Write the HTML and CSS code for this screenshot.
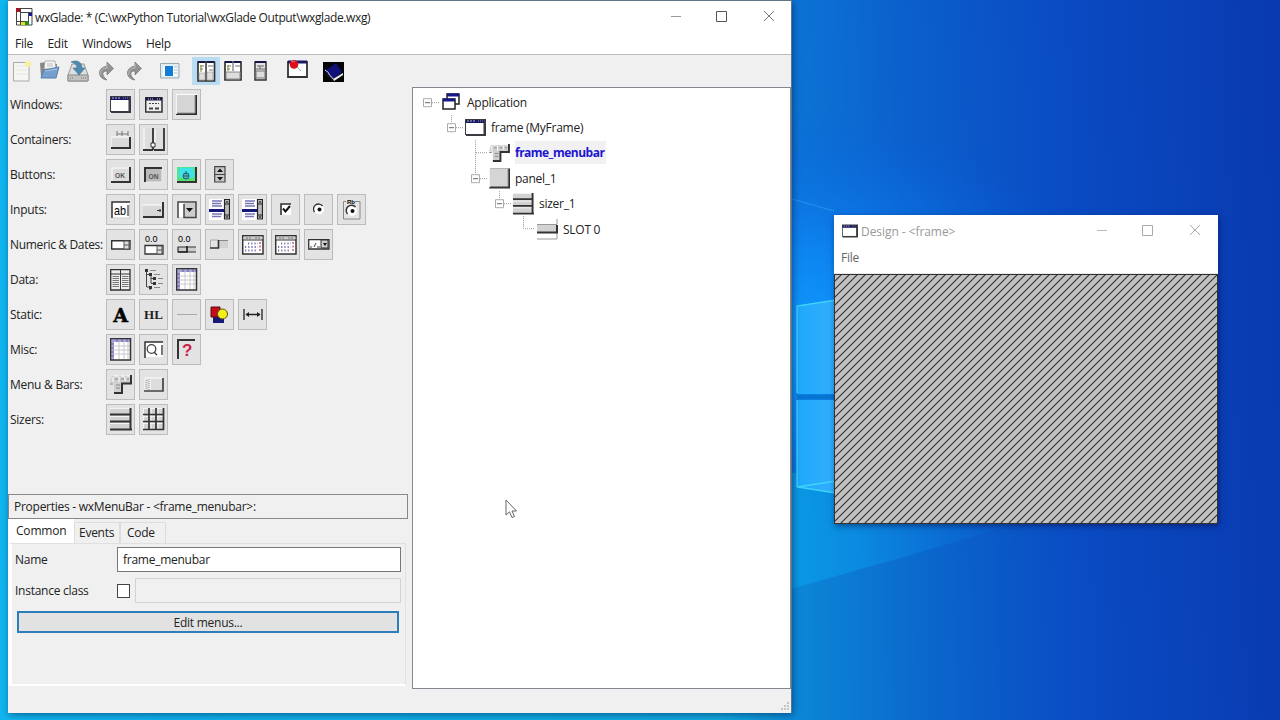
FILE: index.html
```html
<!DOCTYPE html>
<html lang="en">
<head>
<meta charset="utf-8">
<title>wxGlade</title>
<link rel="stylesheet" href="styles.css">
</head>
<body>
<svg class="defs" width="0" height="0">
<defs>
<symbol id="frame" viewBox="0 0 21 17"><path d="M0 0H21V17H1V16H0Z" fill="#3a3a42"/><path d="M1 4H18.5V15H1Z" fill="#fff"/><path d="M1 1H19V4H1Z" fill="#171760"/><path d="M2 2H10" stroke="#bbc" stroke-dasharray="2 1"/><path d="M13 2H18" stroke="#99a" stroke-dasharray="1 1"/></symbol>
<symbol id="panel" viewBox="0 0 22 22"><path d="M0 0H22V22H0Z" fill="#fff"/><path d="M1 1H22V22H0V21H1Z" fill="#2d2d2d"/><path d="M1 1H20V20H1Z" fill="#d5d5d5"/><path d="M1 20H20V1" fill="none" stroke="#888"/></symbol>
<symbol id="bars" viewBox="0 0 22 23"><path d="M0 0H21V22H0Z" fill="#d2d2d2"/><path d="M0 .5H20M0 8.500H20M0 15.500H20" stroke="#f4f4f4"/><path d="M0 6.500H21M0 13.500H21M0 21.5H22" stroke="#333" stroke-width="1.8"/><path d="M20.500 0V22" stroke="#333" stroke-width="2"/></symbol>
<symbol id="menubar" viewBox="0 0 22 19"><path d="M2 1H21V9H12V18H4V8H0Z" fill="#cfcfcf"/><path d="M21 0V8.5H12V18H4" fill="none" stroke="#333" stroke-width="2"/><path d="M3 2V7M4 1H9M9 2V7M11 1H15M15 2V6M17 1H20" stroke="#fff"/><path d="M0 9H3M5 4H8M11 4H14M17 4H19M6 10H10M6 13H10" stroke="#888"/></symbol>
<symbol id="grid" viewBox="0 0 22 23"><path d="M0 0H21V22H0Z" fill="#fff"/><path d="M0 0H21V4H4V22H0Z" fill="#a7a3d8"/><path d="M4 8H20M4 12H20M4 16H20M9 4V21M14 4V21M18 4V21" stroke="#c7c7cd"/><path d="M1 6H4M1 10H4M1 14H4M1 18H4M7 1V4M12 1V4M17 1V4" stroke="#696590"/><path d="M.5 .5H20.5V22H.5Z" fill="none" stroke="#333" stroke-width="1.5"/></symbol>
<symbol id="list" viewBox="0 0 21 21"><path d="M0 0H21V21H0Z" fill="#fff"/><path d="M3 2H13M3 4.500H12M3 7H13M3 15H13M3 17.500H12" stroke="#7777b5" stroke-width="1.5"/><path d="M0 10H15V13H0Z" fill="#181878"/><path d="M15.5 .5H20.5V20H15.5ZM15.500 5H20.500M15.500 16H20.500" fill="#bbb" stroke="#222" stroke-width="1.2"/><path d="M16.500 3.500L18 2L19.500 3.500ZM16.500 17.500L18 19L19.500 17.500Z" fill="#000"/></symbol>
<symbol id="calendar" viewBox="0 0 22 20"><path d="M.7 .7H21V19H.7Z" fill="#fff" stroke="#333" stroke-width="1.5"/><path d="M1.500 3H20.500" stroke="#ccc" stroke-width="2.500"/><path d="M4 3H9M13 3H18" stroke="#777" stroke-dasharray="2 1"/><path d="M1 5H21" stroke="#333"/><path d="M6 8.500H16M3 12H16M3 15.500H14" stroke="#7272aa" stroke-width="2" stroke-dasharray="1.200 2"/><path d="M18 7V17" stroke="#cc647e" stroke-width="1.500" stroke-dasharray="2 1.500"/></symbol>
<symbol id="redo" viewBox="0 0 28 28"><path d="M15 5L21.500 11.500L15 18V14C10 14 9 18 15 23C6 22 4 11 15 9Z" fill="#929292" stroke="#777" stroke-width=".7"/><path d="M15 7V11C10 11 8 14 9 18" fill="none" stroke="#bdbdbd"/></symbol>
<linearGradient id="sky" x1="0" x2="1" y1=".45" y2=".4"><stop offset="0" stop-color="#0c76d6"/><stop offset=".25" stop-color="#0b60cc"/><stop offset=".55" stop-color="#0a4cc4"/><stop offset="1" stop-color="#093ab0"/></linearGradient>
<linearGradient id="edge" x1="0" x2="1"><stop offset="0" stop-color="#10b6f0"/><stop offset=".9" stop-color="#11aadf"/><stop offset="1" stop-color="#0b88d2"/></linearGradient>
<radialGradient id="glow"><stop offset="0" stop-color="#109cff"/><stop offset=".4" stop-color="#0d88f6" stop-opacity=".8"/><stop offset="1" stop-color="#0b5ddd" stop-opacity="0"/></radialGradient>
<linearGradient id="beam" x1="0" x2="1"><stop offset="0" stop-color="#0a9be4"/><stop offset=".3" stop-color="#0b8de2" stop-opacity=".9"/><stop offset="1" stop-color="#0b66dd" stop-opacity="0"/></linearGradient>
<linearGradient id="low" x1="0" x2="1"><stop offset="0" stop-color="#0b8ed8" stop-opacity=".9"/><stop offset=".5" stop-color="#0b6bcb" stop-opacity=".5"/><stop offset="1" stop-color="#0a50c4" stop-opacity="0"/></linearGradient>
<linearGradient id="pane" x1="0" x2="1"><stop offset="0" stop-color="#20a9fb"/><stop offset="1" stop-color="#32aefe"/></linearGradient>
<pattern id="hatch" width="8" height="8" patternUnits="userSpaceOnUse"><path d="M-2 10L10 -2M-2 2L2 -2M6 10L10 6" stroke="#303030" stroke-width="1.1"/></pattern>
</defs>
</svg>
<main class="desktop">
<svg class="wallpaper" width="1280" height="720">
<rect width="800" height="720" fill="url(#edge)"/>
<rect x="792" width="488" height="720" fill="url(#sky)"/>
<ellipse cx="800" cy="340" rx="300" ry="230" fill="url(#glow)"/>
<path d="M780 500H1100V720H780Z" fill="url(#low)"/>
<path d="M780 470L1030 520L900 558L780 592Z" fill="url(#beam)"/>
<path d="M792 199L834 211" stroke="#3ba3f5" opacity=".6"/>
<path d="M797 306L836 300V394H797ZM797 400H836V493L797 487Z" fill="url(#pane)"/>
<path d="M836 300L797 306V393M797 400V487L836 493M797 487L836 481" fill="none" stroke="#3fd5fa" stroke-width="1.300"/>
<path d="M797 397H836" stroke="#0874d2" stroke-width="5"/>
</svg>

<section class="window main">
<header class="titlebar">
<svg width="17" height="18" viewBox="0 0 17 18"><path d="M.5 .5H16V17H.5Z" fill="#fff" stroke="#444"/><path d="M4.500 0V17M4 4.500H16M12.500 4V17M1 13.500H13" stroke="#444"/><path d="M0 0H4V4H0Z" fill="#a31225"/><path d="M13 5H16V8H13Z" fill="#171799"/><path d="M5 14H9V17H5Z" fill="#e7dc17"/><path d="M9 13H13V17H9Z" fill="#258c29"/></svg>
<span class="title t-title">wxGlade: * (C:\wxPython Tutorial\wxGlade Output\wxglade.wxg)</span>
<svg class="controls" width="102" height="12" viewBox="0 0 102 12"><path d="M0 5.500H10" stroke="#999"/><path d="M45.500 .5H55.500V10.500H45.500Z" fill="none" stroke="#555"/><path d="M93 0L103 10M103 0L93 10" stroke="#777"/></svg>
</header>
<nav class="menu"><span>File</span><span>Edit</span><span>Windows</span><span>Help</span></nav>
<div class="toolbar">
<svg class="tool" viewBox="1 0 28 28"><path d="M6.500 5.500H22V24H6.500Z" fill="#f6f6f2" stroke="#aaa"/><path d="M8 9H20M8 13H20M8 17H20" stroke="#e7e7e2"/><circle cx="21" cy="7" r="3" fill="#f4f29c"/></svg>
<svg class="tool" viewBox="1 0 28 28"><path d="M5 6L11 5L13 7H22V20H6Z" fill="#888"/><path d="M10 4H20L21 12H9Z" fill="#f5f5f5" stroke="#999" stroke-width=".7"/><path d="M12 7H18M12 9H18" stroke="#bbb"/><path d="M9 13L24 10L21 21H6Z" fill="#749fce" stroke="#5781ae"/><path d="M10 14L22 12" stroke="#a9c8e6"/></svg>
<svg class="tool" viewBox="0 0 28 28"><path d="M8 7H20L24 18V24H4V18Z" fill="#dedede" stroke="#999"/><path d="M4 18H24V24H4Z" fill="#c2c2c2" stroke="#888"/><path d="M17 21H22M6 21H10" stroke="#777" stroke-dasharray="1 1"/><path d="M7 5C14 2 18 6 18 11H21L15 18L9 11H13C13 8 11 6 7 5Z" fill="#4d8bae" stroke="#3c718f" stroke-width=".6"/></svg>
<svg class="tool"><use href="#redo"/></svg><svg class="tool"><use href="#redo"/></svg>
<svg class="tool gap" viewBox="0 0 28 28"><path d="M4.500 6.500H23V21H4.500Z" fill="#e2edf3" stroke="#9caaaf"/><path d="M7 9H21V19H7Z" fill="#fff"/><path d="M9 9H17V19H9Z" fill="#127dd6"/><path d="M18 10H21M18 13H21M18 16H21" stroke="#a7bac5"/></svg>
<svg class="tool gap active" viewBox="1 0 28 28"><path d="M7 5H23.500V24H7Z" fill="#fff" stroke="#333" stroke-width="1.700"/><path d="M7 5H14M16 5H23" stroke="#171744" stroke-width="2"/><path d="M15 4V24" stroke="#333" stroke-width="1.500"/><path d="M9 9H13M9 12H12M17 9H22M18 13H22" stroke="#777"/><path d="M10 8V15" stroke="#729129"/><path d="M8 16H14V23H8ZM16 15H22V23H16Z" fill="#ddd" stroke="#888" stroke-width=".5"/></svg>
<svg class="tool" viewBox="1 0 28 28"><path d="M6 5H22V23H6Z" fill="#fff" stroke="#333" stroke-width="1.700"/><path d="M6 5H13M15 5H22" stroke="#171744" stroke-width="2"/><path d="M14 4V14" stroke="#555"/><path d="M8 9H12M8 12H11M16 9H21" stroke="#777"/><path d="M9 8V14" stroke="#729129"/><path d="M7 15H21V22H7Z" fill="#ddd" stroke="#888"/></svg>
<svg class="tool" viewBox="1 0 28 28"><path d="M8 5H19V23H8Z" fill="#e4e4e4" stroke="#333" stroke-width="1.500"/><path d="M8 5H19" stroke="#171744" stroke-width="2"/><path d="M10 9H17M8 12H19M13 9V12" stroke="#666"/><path d="M9 14H18V21H9Z" fill="#ddd" stroke="#777"/></svg>
<svg class="tool gap" viewBox="1 1 28 28"><path d="M5 6H24V21H5Z" fill="#fff" stroke="#333" stroke-width="1.800"/><path d="M5 6H24" stroke="#191967" stroke-width="3"/><path d="M13 10L18 15" stroke="#aaa"/><circle cx="11" cy="8.500" r="4.300" fill="#d9111b"/><path d="M8 5L12 6" stroke="#ff6464"/></svg>
<svg class="tool gap" viewBox="1 0 28 28"><path d="M4 5H25V25H4Z" fill="#050507"/><path d="M6 14L17 6L23 15L14 22Z" fill="#101078"/><path d="M6 14L14 22V25L6 17ZM14 22L24 16V19L15 25Z" fill="#111"/><path d="M14 22L24 16V18L15 24Z" fill="#eee"/><path d="M6 13C8 15 9 14 10 17S13 19 14 22" fill="none" stroke="#d8d8ff"/></svg>
</div>
<div class="content">
<div class="left">
<div class="palette">
<div class="prow"><span>Windows:</span>
<i class="pb"><svg width="21" height="17"><use href="#frame"/></svg></i>
<i class="pb"><svg width="18" height="16" viewBox="0 0 18 16"><path d="M.7 .7H17V15H.7Z" fill="#eee" stroke="#333" stroke-width="1.500"/><path d="M1 2H17" stroke="#171744" stroke-width="3"/><path d="M3 2H8M12 2H16" stroke="#ccc" stroke-dasharray="1 1"/><path d="M4 6.500H14" stroke="#444" stroke-dasharray="2 1"/><path d="M4 11.500H8M10 11.500H14" stroke="#444" stroke-width="2"/></svg></i>
<i class="pb"><svg width="21" height="23"><use href="#panel"/></svg></i></div>
<div class="prow"><span>Containers:</span>
<i class="pb"><svg width="20" height="18" viewBox="0 0 20 18"><path d="M0 6H19V17H0Z" fill="#dadada"/><path d="M0 17V6H18" fill="none" stroke="#fff"/><path d="M0 17H19V6" fill="none" stroke="#333" stroke-width="2"/><path d="M6 0V5M11 0V5M17 0V5M6 3H17" stroke="#777"/></svg></i>
<i class="pb"><svg width="22" height="23" viewBox="0 0 22 23"><path d="M0 0H21V22H0Z" fill="#dedede"/><path d="M0 22H10M11 22H21V0M10 0V22" fill="none" stroke="#333" stroke-width="1.800"/><path d="M1 0V21M12 1V15" stroke="#fff"/><path d="M8 15H12V19H8Z" fill="#fff" stroke="#333"/></svg></i></div>
<div class="prow"><span>Buttons:</span>
<i class="pb"><svg width="20" height="16" viewBox="0 0 20 16"><path d="M0 0H19V15H0Z" fill="#dcdcdc"/><path d="M1 15V1H18" fill="none" stroke="#fff"/><path d="M0 15H19V0" fill="none" stroke="#333" stroke-width="2"/><text x="4" y="10.500" class="mono" textLength="10" lengthAdjust="spacingAndGlyphs">OK</text></svg></i>
<i class="pb"><svg width="19" height="16" viewBox="0 0 19 16"><path d="M0 0H18V15H0Z" fill="#bbb"/><path d="M1 15V1H18" fill="none" stroke="#333" stroke-width="2"/><path d="M2 15H18V2" fill="none" stroke="#eee"/><text x="4.500" y="12" class="mono" textLength="10" lengthAdjust="spacingAndGlyphs">ON</text></svg></i>
<i class="pb"><svg width="20" height="16" viewBox="0 0 20 16"><path d="M0 0H19V15H0Z" fill="#4be696"/><path d="M3 1H15L18 8L13 13H5L2 7Z" fill="#3de3e7"/><path d="M1 11H18V14H1Z" fill="#53df71"/><path d="M0 15H19V0" fill="none" stroke="#333" stroke-width="2"/><circle cx="9" cy="9" r="3" fill="#65aeb0" stroke="#165d77"/><path d="M9 4V7M7 9H11" stroke="#165d77"/></svg></i>
<i class="pb"><svg width="12" height="17" viewBox="0 0 12 17"><path d="M.7 .7H11V16H.7ZM1 8.500H11" fill="#c8c8c8" stroke="#444" stroke-width="1.200"/><path d="M3 6L6 2.500L9 6ZM3 11L6 14.500L9 11Z" fill="#111"/></svg></i></div>
<div class="prow"><span>Inputs:</span>
<i class="pb"><svg width="20" height="18" viewBox="0 0 20 18"><path d="M1 17V1H19" fill="#fff" stroke="#333" stroke-width="1.500"/><path d="M2 2H19V17H2Z" fill="#fff"/><path d="M2 17H18.500V3" fill="none" stroke="#ccc"/><text x="3" y="14" class="abl" textLength="12" lengthAdjust="spacingAndGlyphs">ab</text><path d="M17 4V15" stroke="#111"/></svg></i>
<i class="pb"><svg width="21" height="16" viewBox="0 0 21 16"><path d="M0 3H20V15H0Z" fill="#d8d8d8"/><path d="M0 3H19" stroke="#fff"/><path d="M0 15H20V0" fill="none" stroke="#333" stroke-width="2"/><path d="M14 8.500H18M17 7V10" stroke="#333"/></svg></i>
<i class="pb"><svg width="20" height="18" viewBox="0 0 20 18"><path d="M1 1H19V16H1Z" fill="#fff"/><path d="M7 2H19V16H7Z" fill="#ccc"/><path d="M1 17V1H19V16.500H7V3" fill="none" stroke="#444" stroke-width="1.500"/><path d="M9 7H16L12.500 11Z" fill="#111"/></svg></i>
<i class="pb"><svg width="21" height="21"><use href="#list"/></svg></i><i class="pb"><svg width="21" height="21"><use href="#list"/></svg></i>
<i class="pb low"><svg width="12" height="13" viewBox="0 0 12 13"><path d="M1 12V1H11" fill="none" stroke="#333" stroke-width="1.600"/><path d="M2 2H11V12H2Z" fill="#fff"/><path d="M3 5.500L5.500 8.500L10 3" fill="none" stroke="#111" stroke-width="2"/></svg></i>
<i class="pb"><svg width="12" height="13" viewBox="0 0 12 13"><circle cx="6" cy="6.500" r="5" fill="#fff"/><path d="M1.500 9A5 5 0 0 1 9.500 3" fill="none" stroke="#333" stroke-width="1.300"/><circle cx="6.500" cy="6.500" r="2" fill="#111"/></svg></i>
<i class="pb"><svg width="18" height="21" viewBox="0 0 18 21"><path d="M.5 2.500H17V20H.5Z" fill="#e5e5e5" stroke="#888"/><path d="M3 0H12V5H3Z" fill="#e5e5e5"/><text x="4" y="5" class="rb">Rb</text><circle cx="9" cy="12" r="5" fill="#fff"/><path d="M4.500 15A5 5 0 0 1 12.500 8" fill="none" stroke="#333" stroke-width="1.500"/><circle cx="9.500" cy="12" r="2" fill="#111"/></svg></i></div>
<div class="prow"><span class="t-num">Numeric &amp; Dates:</span>
<i class="pb"><svg width="20" height="10" viewBox="0 0 20 10"><path d="M.7 .7H19V9H.7Z" fill="#fff" stroke="#333" stroke-width="1.400"/><path d="M13 1H18V9H13ZM13 5H18" fill="#ddd" stroke="#555"/></svg></i>
<i class="pb"><svg width="20" height="20" viewBox="0 0 20 20"><text x="1" y="7" class="num">0.0</text><path d="M1 10.500H19V19H1Z" fill="#fff" stroke="#333" stroke-width="1.300"/><path d="M13 11H18V19H13ZM13 15H18" fill="#ddd" stroke="#555"/></svg></i>
<i class="pb"><svg width="20" height="20" viewBox="0 0 20 20"><text x="1" y="7" class="num">0.0</text><path d="M19 12H1V17H19" fill="#ccc" stroke="#333" stroke-width="1.200"/><path d="M1 17H10V11" fill="none" stroke="#222" stroke-width="1.700"/></svg></i>
<i class="pb"><svg width="19" height="12" viewBox="0 0 19 12"><path d="M8 2H18V9H8Z" fill="#d2d2d2"/><path d="M8 1.500H18" stroke="#888"/><path d="M0 1H8V9H0Z" fill="#e4e4e4"/><path d="M.5 9V1H8" fill="none" stroke="#aaa"/><path d="M0 9H8.500V1" fill="none" stroke="#333" stroke-width="1.600"/></svg></i>
<i class="pb"><svg width="22" height="20"><use href="#calendar"/></svg></i><i class="pb"><svg width="22" height="20"><use href="#calendar"/></svg></i>
<i class="pb"><svg width="22" height="11" viewBox="0 0 22 11"><path d="M.7 .7H21V10H.7Z" fill="#fff" stroke="#333" stroke-width="1.300"/><path d="M13 1H20V9H13Z" fill="#ccc" stroke="#333"/><path d="M15 4H19L17 7Z" fill="#111"/><path d="M2 8H4M6 8L8 4M9 8H12" stroke="#444"/></svg></i></div>
<div class="prow"><span>Data:</span>
<i class="pb"><svg width="21" height="22" viewBox="0 0 21 22"><path d="M.7 .7H20V21H.7Z" fill="#eee" stroke="#333" stroke-width="1.300"/><path d="M1 5H20M10.500 1V21" stroke="#333"/><path d="M2.500 7.500H9M2.500 9.500H9M2.500 11.500H9M2.500 13.500H9M2.500 15.500H9M2.500 17.500H9M12 7.500H18.500M12 9.500H18.500M12 11.500H18.500M12 13.500H18.500M12 15.500H18.500M12 17.500H18.500" stroke="#777"/></svg></i>
<i class="pb"><svg width="20" height="22" viewBox="0 0 20 22"><path d="M2.500 2V18M3 18H6V21M7 6V14M3 5.500H7M7 9.500H10M7 14.500H10" fill="none" stroke="#444"/><path d="M1 0H4V3H1ZM5 4H8V7H5ZM9 8H12V11H9ZM9 13H12V16H9ZM5 17H8V20H5Z" fill="#333"/><path d="M6 1.500H12M10 5.500H16M14 9.500H19M14 14.500H19M10 18.500H16" stroke="#888"/></svg></i>
<i class="pb"><svg width="22" height="23"><use href="#grid"/></svg></i></div>
<div class="prow"><span>Static:</span>
<i class="pb"><b class="big">A</b></i><i class="pb"><b class="hl">HL</b></i>
<i class="pb"><svg width="20" height="3" viewBox="0 0 20 3"><path d="M0 1.500H20" stroke="#aaa"/></svg></i>
<i class="pb"><svg width="19" height="18" viewBox="0 0 19 18"><path d="M3 9H14V17H3Z" fill="#171777"/><path d="M1 1H10V11H1Z" fill="#c40c1b" stroke="#511"/><circle cx="12.500" cy="8" r="5" fill="#f4ef16" stroke="#55521a"/></svg></i>
<i class="pb"><svg width="20" height="11" viewBox="0 0 20 11"><path d="M1 0V11M19 0V11M3 5.500H17" stroke="#222" stroke-width="1.300"/><path d="M2.500 5.500L6 3V8ZM17.500 5.500L14 3V8Z" fill="#222"/></svg></i></div>
<div class="prow"><span>Misc:</span>
<i class="pb"><svg width="22" height="23"><use href="#grid"/></svg></i>
<i class="pb"><svg width="20" height="18" viewBox="0 0 20 18"><path d="M1 1H19V16H1Z" fill="#fff"/><path d="M1 17V1H19" fill="none" stroke="#333" stroke-width="1.500"/><circle cx="7.500" cy="8" r="4.300" fill="#fff" stroke="#444" stroke-width="1.300"/><path d="M10 11L13 14M18 4V14" stroke="#333" stroke-width="1.300"/></svg></i>
<i class="pb"><svg width="20" height="21" viewBox="0 0 20 21"><path d="M1 20V1H18" fill="#e3e3e3" stroke="#333" stroke-width="2"/><text x="5" y="17" class="quest">?</text></svg></i></div>
<div class="prow"><span>Menu &amp; Bars:</span>
<i class="pb"><svg width="22" height="19"><use href="#menubar"/></svg></i>
<i class="pb"><svg width="20" height="16" viewBox="0 0 20 16"><path d="M0 1H19V14H0Z" fill="#ddd"/><path d="M1 14V1H18M6 2V13" fill="none" stroke="#fff"/><path d="M2 3V12M5 2V14" stroke="#999" stroke-dasharray="1 1"/><path d="M0 14H19V1" fill="none" stroke="#444" stroke-width="1.700"/></svg></i></div>
<div class="prow"><span>Sizers:</span>
<i class="pb"><svg width="22" height="23"><use href="#bars"/></svg></i>
<i class="pb"><svg width="22" height="23" viewBox="0 0 22 23"><path d="M0 0H21V22H0Z" fill="#d2d2d2"/><path d="M.5 0V22M8 0V22M15 0V22M0 .5H21M0 8.500H21M0 15.500H21" stroke="#f4f4f4"/><path d="M6 0V22M13 0V22M20.500 0V22M0 6.500H21M0 13.500H21M0 21.500H21" stroke="#333" stroke-width="1.700"/></svg></i></div>
</div>
<div class="prop-title"><span class="t-prop">Properties - wxMenuBar - &lt;frame_menubar&gt;:</span></div>
<div class="tabs"><span class="tab on">Common</span><span class="tab">Events</span><span class="tab code">Code</span></div>
<div class="props">
<div class="field"><label>Name</label><span class="input">frame_menubar</span></div>
<div class="field second"><label>Instance class</label><span class="check"></span><span class="input off"></span></div>
<div class="edit">Edit menus...</div>
</div>
</div>
<div class="tree">
<div class="node"><svg class="exp" viewBox="0 0 19 25"><path d="M10 12.500H17" class="dot"/><path d="M1.500 8.500H9.500V16.500H1.500Z" class="box"/><path d="M3 12.500H8" class="dash"/></svg><svg class="ni" viewBox="0 0 22 24"><path d="M6 4H18V14H6Z" fill="#fff" stroke="#222" stroke-width="1.500"/><path d="M6 5H18" stroke="#171789" stroke-width="3"/><path d="M2 9H14V19H2Z" fill="#fff" stroke="#222" stroke-width="1.500"/><path d="M2 10H14" stroke="#171789" stroke-width="3"/></svg><span>Application</span></div>
<div class="node l1"><svg class="exp" viewBox="0 0 19 25"><path d="M5.500 0V8M10 12.500H17" class="dot"/><path d="M1.500 8.500H9.500V16.500H1.500Z" class="box"/><path d="M3 12.500H8" class="dash"/></svg><span class="ni"><svg width="21" height="17"><use href="#frame"/></svg></span><span>frame (MyFrame)</span></div>
<div class="node l2"><svg class="exp" viewBox="0 0 19 25"><path d="M5.500 0V25M6 12.500H17" class="dot"/></svg><span class="ni"><svg width="21" height="18"><use href="#menubar"/></svg></span><span class="sel">frame_menubar</span></div>
<div class="node l2"><svg class="exp" viewBox="0 0 19 25"><path d="M5.500 0V8M10 12.500H17" class="dot"/><path d="M1.500 8.500H9.500V16.500H1.500Z" class="box"/><path d="M3 12.500H8" class="dash"/></svg><span class="ni"><svg width="21" height="22"><use href="#panel"/></svg></span><span>panel_1</span></div>
<div class="node l3"><svg class="exp" viewBox="0 0 19 25"><path d="M5.500 0V8M10 12.500H17" class="dot"/><path d="M1.500 8.500H9.500V16.500H1.500Z" class="box"/><path d="M3 12.500H8" class="dash"/></svg><span class="ni"><svg width="21" height="22"><use href="#bars"/></svg></span><span>sizer_1</span></div>
<div class="node l4"><svg class="exp" viewBox="0 0 19 25"><path d="M5.500 0V12.500H17" class="dot"/></svg><span class="ni"><svg width="21" height="22" viewBox="0 0 21 22"><path d="M0 7H20V14H0Z" fill="#d2d2d2"/><path d="M0 6.500H20M0 21H20M20 1V6M20 15V21" stroke="#999"/><path d="M0 14.500H20V7" fill="none" stroke="#333" stroke-width="2"/></svg></span><span>SLOT 0</span></div>
</div>
</div>
<footer class="status"><svg width="10" height="10" viewBox="0 0 10 10"><path d="M7 1H9M4 4H6M7 4H9M1 7H3M4 7H6M7 7H9" stroke="#c4c4c4" stroke-width="2"/></svg></footer>
</section>

<section class="window design">
<header class="titlebar"><svg width="16" height="14"><use href="#frame"/></svg><span class="title t-design">Design - &lt;frame&gt;</span><svg class="controls" width="104" height="12" viewBox="0 0 104 12"><path d="M0 5.500H10" stroke="#bbb"/><path d="M45.500 .5H55.500V10.500H45.500Z" fill="none" stroke="#aaa"/><path d="M93 0L103 10M103 0L93 10" stroke="#aaa"/></svg></header>
<nav class="menu"><span>File</span></nav>
<svg class="canvas" width="384" height="250"><rect width="384" height="250" fill="#c1c1c1"/><rect width="384" height="250" fill="url(#hatch)"/><rect x=".5" y=".5" width="383" height="249" fill="none" stroke="#333"/></svg>
</section>
<svg class="cursor" width="13" height="20" viewBox="0 0 13 20"><path d="M1 1V16L4.500 12.800L7 18.500L9.500 17.500L7 12H11.500Z" fill="#fff" stroke="#666"/></svg>
</main>
</body>
</html>
```
FILE: styles.css
```css
* { box-sizing: border-box; }
body { margin: 0; font-family: "Open Sans", "Noto Sans", sans-serif; font-size: 12px; letter-spacing: -.26px; color: #222; }
.defs { position: absolute; }
svg { display: block; flex: none; letter-spacing: 0; }
.desktop { position: relative; width: 1280px; height: 720px; overflow: hidden; }
.wallpaper { position: absolute; left: 0; top: 0; }
.window { position: absolute; display: flex; flex-direction: column; background: #f0f0f0; white-space: nowrap; }
.main { left: 8px; top: 0; width: 784px; height: 713px; border-top: 1px solid #5d7585; border-right: 1px solid #5a7788; box-shadow: 1px 2px 7px rgba(0,20,70,.5); }
.titlebar { display: flex; align-items: center; height: 32px; padding-left: 8px; background: #fff; flex: none; }
.title { margin-left: 3px; }
.t-title { margin-left: 2px; letter-spacing: -.39px; }
.t-design { letter-spacing: -.06px; }
.t-num { letter-spacing: -.34px; }
.controls { margin-left: auto; overflow: visible; }
.main .controls { margin-right: 18px; }
.menu { display: flex; align-items: center; gap: 14.5px; background: #fff; height: 22px; padding: 0 0 0 7px; }
.main .menu { border-bottom: 1px solid #bbb; }
.toolbar { display: flex; height: 32px; padding-top: 2px; }
.tool { width: 28px; height: 28px; }
.gap { margin-left: 8px; }
.active { background: #b9dcf3; }
.content { display: flex; height: 602px; flex: none; }
.left { width: 404px; flex: none; display: flex; flex-direction: column; }
.palette { display: flex; flex-direction: column; gap: 4px; padding: 2px 0 0 2px; height: 407px; flex: none; }
.prow { display: flex; height: 31px; align-items: center; gap: 4px; }
.prow > span { width: 92px; }
.pb { width: 29px; height: 31px; border: 1px solid #bcbcbc; background: #e3e3e3; display: flex; align-items: center; justify-content: center; font-style: normal; flex: none; }
.mono { font: bold 8px "Liberation Sans", sans-serif; fill: #555; }
.abl { font: 13px "Liberation Sans", sans-serif; }
.rb { font: bold 6px "Liberation Sans", sans-serif; }
.num { font: 9px "Liberation Sans", sans-serif; }
.quest { font: bold 17px "Liberation Sans", sans-serif; fill: #cb2146; }
.big { font: bold 19px "DejaVu Serif", serif; letter-spacing: 0; color: #000; -webkit-text-stroke: .5px #000; }
.hl { font: bold 13px "Liberation Serif", serif; letter-spacing: 0; }
.prop-title { width: 400px; height: 25px; border: 1px solid #888; padding-left: 5px; display: flex; align-items: center; flex: none; }
.tabs { display: flex; height: 24px; align-items: flex-end; flex: none; }
.tab { height: 21px; border: 1px solid #ddd; border-bottom: 0; display: flex; align-items: center; padding: 0 0 1px 4px; width: 46px; }
.tab.code { padding-left: 6px; }
.tab.on { width: 66px; height: 24px; background: #fff; padding: 0 0 2px 8px; border: 0; letter-spacing: -.2px; }
.props { width: 398px; height: 143px; border: 1px solid #e0e0e0; border-left: 4px solid #fff; border-bottom: 2px solid #fff; padding: 3px 4px 0 3px; }
.field { display: flex; align-items: center; height: 25px; }
.second { margin-top: 6px; }
.field label { width: 102px; flex: none; }
.input { flex: 1; height: 25px; border: 1px solid #777; background: #fff; padding-left: 5px; display: flex; align-items: center; }
.input.off { border-color: #d2d2d2; background: #f0f0f0; margin-left: 5px; }
.check { width: 13px; height: 14px; border: 1px solid #444; background: #fff; }
.edit { margin: 8px 2px 0 2px; height: 22px; border: 2px solid #2c7fb9; background: #e2e2e2; display: flex; align-items: center; justify-content: center; }
.tree { flex: 1; background: #fff; border: 1px solid #828790; padding: 1.500px 0 0 9px; }
.node { display: flex; height: 25.4px; align-items: center; }
.l1 { padding-left: 24px; }
.l2 { padding-left: 48px; }
.l3 { padding-left: 72px; }
.l4 { padding-left: 96px; }
.exp { width: 19px; height: 25.4px; }
.ni { width: 22px; height: 24px; display: flex; align-items: center; margin-right: 4px; }
.dot { fill: none; stroke: #999; stroke-dasharray: 1 1; }
.box { fill: #fff; stroke: #aaa; }
.dash { stroke: #666; }
.sel { color: #2015cf; background: #f1f1f3; font-weight: 700; letter-spacing: -.52px; height: 23px; line-height: 23px; padding-right: 2px; }
.status { display: flex; align-items: flex-end; justify-content: flex-end; flex: 1; padding: 0 1px 1px 0; }
.design { left: 834px; top: 215px; width: 384px; height: 309px; box-shadow: 1px 2px 6px rgba(0,10,60,.5); background: #fff; }
.design .titlebar { color: #999; }
.design .controls { margin-right: 17px; }
.design .menu { color: #666; height: 27px; padding-bottom: 5px; border-bottom: 1px solid #e5e5e5; }
.cursor { position: absolute; left: 505px; top: 499px; }
```
